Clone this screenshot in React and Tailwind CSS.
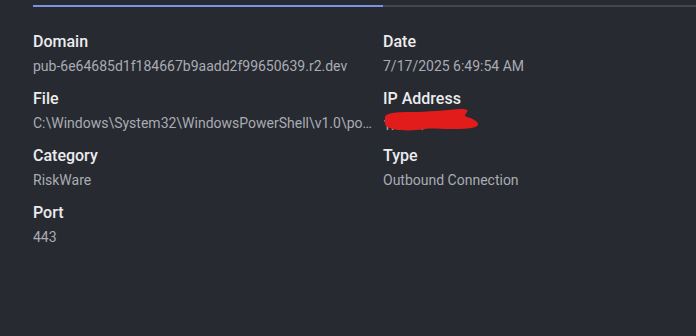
import React from "react";

const items = [
  ["Domain", "pub-6e64685d1f184667b9aadd2f99650639.r2.dev", "Date", "7/17/2025 6:49:54 AM"],
  ["File", "C:\\Windows\\System32\\WindowsPowerShell\\v1.0\\powershell.exe", "IP Address", "ip"],
  ["Category", "RiskWare", "Type", "Outbound Connection"],
  ["Port", "443", null, null],
];

function Field({ label, value }) {
  return (
    <div className="min-w-0">
      <div className="text-[16px] leading-[20px] font-medium text-[#ececee]">{label}</div>
      {value === "ip" ? (
        <div className="relative mt-[4px] h-[20px]">
          <span className="text-[14px] leading-[20px] text-[#a9acb3]">1.1.1.1</span>
          <svg className="absolute left-[0px] top-[-7px]" width="100" height="28" viewBox="0 0 100 28">
            <path
              d="M2 11 C 3 7, 12 6, 28 6 C 45 6, 62 4, 76 3 C 82 2.5, 86 3.5, 84 6 C 83 8, 80 10, 84 11 C 88 12, 96 15, 95 19 C 93 23, 80 23, 66 23 C 56 23, 50 22, 42 23 C 34 24, 26 25, 18 24 C 10 23.5, 3 22, 2 18 Z"
              fill="#e21b1b"
            />
          </svg>
        </div>
      ) : (
        <div className="mt-[4px] pr-[1px] text-[14px] leading-[20px] text-[#a9acb3] truncate">{value}</div>
      )}
    </div>
  );
}

export default function App() {
  return (
    <div className="w-[696px] h-[336px] bg-[#272a31] overflow-hidden" style={{ fontFamily: "Roboto, 'Liberation Sans', sans-serif" }}>
      <div className="flex pt-[5px] pl-[33px]">
        <div className="w-[350px] h-[2px] bg-[#7b93e0]" />
        <div className="flex-1 h-[2px] bg-[#44464f]" />
      </div>
      <div className="grid grid-cols-[350px_300px] gap-y-[13px] pl-[33px] pt-[25px]">
        {items.map((r, i) => (
          <React.Fragment key={i}>
            <Field label={r[0]} value={r[1]} />
            {r[2] ? <Field label={r[2]} value={r[3]} /> : <div />}
          </React.Fragment>
        ))}
      </div>
    </div>
  );
}
